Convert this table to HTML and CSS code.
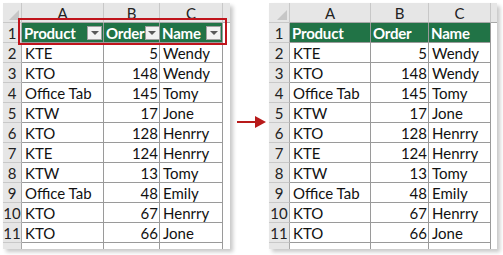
FILE: index.html
```html
<!DOCTYPE html>
<html>
<head>
<meta charset="utf-8">
<link rel="stylesheet" href="styles.css">
</head>
<body>
<div class="page">
  <div class="sheet sheet-left">
    <div class="corner"><svg width="12" height="12" viewBox="0 0 12 12"><polygon points="11,1 11,11 1,11" fill="#c6c6c6"/></svg></div>
    <div class="colhdr">A</div><div class="colhdr">B</div><div class="colhdr">C</div><div class="colhdr extra"></div>

    <div class="rowhdr">1</div>
    <div class="cell head"><span>Product</span><span class="dd"></span></div>
    <div class="cell head"><span>Order</span><span class="dd"></span></div>
    <div class="cell head"><span>Name</span><span class="dd"></span></div>
    <div class="cell tail"></div>

    <div class="rowhdr">2</div><div class="cell">KTE</div><div class="cell num">5</div><div class="cell">Wendy</div><div class="cell tail"></div>
    <div class="rowhdr">3</div><div class="cell">KTO</div><div class="cell num">148</div><div class="cell">Wendy</div><div class="cell tail"></div>
    <div class="rowhdr">4</div><div class="cell">Office Tab</div><div class="cell num">145</div><div class="cell">Tomy</div><div class="cell tail"></div>
    <div class="rowhdr">5</div><div class="cell">KTW</div><div class="cell num">17</div><div class="cell">Jone</div><div class="cell tail"></div>
    <div class="rowhdr">6</div><div class="cell">KTO</div><div class="cell num">128</div><div class="cell">Henrry</div><div class="cell tail"></div>
    <div class="rowhdr">7</div><div class="cell">KTE</div><div class="cell num">124</div><div class="cell">Henrry</div><div class="cell tail"></div>
    <div class="rowhdr">8</div><div class="cell">KTW</div><div class="cell num">13</div><div class="cell">Tomy</div><div class="cell tail"></div>
    <div class="rowhdr">9</div><div class="cell">Office Tab</div><div class="cell num">48</div><div class="cell">Emily</div><div class="cell tail"></div>
    <div class="rowhdr">10</div><div class="cell">KTO</div><div class="cell num">67</div><div class="cell">Henrry</div><div class="cell tail"></div>
    <div class="rowhdr">11</div><div class="cell">KTO</div><div class="cell num">66</div><div class="cell">Jone</div><div class="cell tail"></div>
    <div class="rowhdr part"></div><div class="cell part"></div><div class="cell part"></div><div class="cell part"></div><div class="cell tail part"></div>

    <div class="highlight"></div>
  </div>

  <div class="arrow">
    <svg width="30" height="12" viewBox="0 0 30 12"><rect x="0" y="5" width="19" height="2" fill="#b81a1a"/><polygon points="18,0 29,6 18,12" fill="#b81a1a"/></svg>
  </div>

  <div class="sheet sheet-right">
    <div class="corner"><svg width="12" height="12" viewBox="0 0 12 12"><polygon points="11,1 11,11 1,11" fill="#c6c6c6"/></svg></div>
    <div class="colhdr">A</div><div class="colhdr">B</div><div class="colhdr">C</div><div class="colhdr extra"></div>

    <div class="rowhdr">1</div>
    <div class="cell head">Product</div>
    <div class="cell head">Order</div>
    <div class="cell head">Name</div>
    <div class="cell tail"></div>

    <div class="rowhdr">2</div><div class="cell">KTE</div><div class="cell num">5</div><div class="cell">Wendy</div><div class="cell tail"></div>
    <div class="rowhdr">3</div><div class="cell">KTO</div><div class="cell num">148</div><div class="cell">Wendy</div><div class="cell tail"></div>
    <div class="rowhdr">4</div><div class="cell">Office Tab</div><div class="cell num">145</div><div class="cell">Tomy</div><div class="cell tail"></div>
    <div class="rowhdr">5</div><div class="cell">KTW</div><div class="cell num">17</div><div class="cell">Jone</div><div class="cell tail"></div>
    <div class="rowhdr">6</div><div class="cell">KTO</div><div class="cell num">128</div><div class="cell">Henrry</div><div class="cell tail"></div>
    <div class="rowhdr">7</div><div class="cell">KTE</div><div class="cell num">124</div><div class="cell">Henrry</div><div class="cell tail"></div>
    <div class="rowhdr">8</div><div class="cell">KTW</div><div class="cell num">13</div><div class="cell">Tomy</div><div class="cell tail"></div>
    <div class="rowhdr">9</div><div class="cell">Office Tab</div><div class="cell num">48</div><div class="cell">Emily</div><div class="cell tail"></div>
    <div class="rowhdr">10</div><div class="cell">KTO</div><div class="cell num">67</div><div class="cell">Henrry</div><div class="cell tail"></div>
    <div class="rowhdr">11</div><div class="cell">KTO</div><div class="cell num">66</div><div class="cell">Jone</div><div class="cell tail"></div>
    <div class="rowhdr part"></div><div class="cell part"></div><div class="cell part"></div><div class="cell part"></div><div class="cell tail part"></div>
  </div>
</div>
</body>
</html>
```

FILE: styles.css
```css
* { box-sizing: border-box; }
html, body { margin: 0; padding: 0; background: #ffffff; }
body { width: 503px; height: 255px; overflow: hidden; font-family: Lato, "Open Sans", sans-serif; }

.page {
  display: flex;
  align-items: flex-start;
  padding: 3px 0 0 3px;
}

.sheet {
  position: relative;
  display: grid;
  grid-template-rows: 20px repeat(11, 20px) 6px;
  background: #ffffff;
  box-shadow: 3px 3px 4px rgba(0, 0, 0, 0.22);
  font-size: 15px;
  color: #111;
}
.sheet-left { grid-template-columns: 19px 82px 56px 63px 7px; }
.sheet-right { grid-template-columns: 21px 81px 58px 62px 6px; margin-left: 39px; }

.corner {
  background: #e6e6e6;
  border-right: 1px solid #c8c8c8;
  border-bottom: 1px solid #c8c8c8;
  display: flex;
  align-items: flex-end;
  justify-content: flex-end;
  padding: 0 1px 1px 0;
}
.colhdr {
  background: #e6e6e6;
  border-right: 1px solid #c8c8c8;
  border-bottom: 1px solid #a8a8a8;
  text-align: center;
  line-height: 20px;
  color: #222;
}
.colhdr.extra { border-right: none; }

.rowhdr {
  background: #e6e6e6;
  border-right: 1px solid #a8a8a8;
  border-bottom: 1px solid #c8c8c8;
  text-align: center;
  line-height: 20px;
  color: #222;
}
.rowhdr.part { border-bottom: none; }

.cell {
  border-right: 1px solid #9a9a9a;
  border-bottom: 1px solid #9a9a9a;
  padding: 0 1px 0 3px;
  line-height: 20px;
  white-space: nowrap;
  overflow: hidden;
}
.cell.num { text-align: right; }
.cell.tail { border-right: none; border-bottom-color: transparent; }
.cell.part { border-bottom: none; }

.cell.head {
  background: #217346;
  color: #ffffff;
  font-weight: 700;
  letter-spacing: -0.2px;
  display: flex;
  align-items: center;
  justify-content: space-between;
  padding-left: 2px;
  padding-right: 1px;
}
.sheet-right .cell.head { display: block; }

.dd {
  width: 15px;
  height: 14px;
  background: #f2f2f2;
  border: 1px solid #a0a0a0;
  display: flex;
  align-items: center;
  justify-content: center;
  flex: none;
}
.dd::after {
  content: "";
  border-left: 4px solid transparent;
  border-right: 4px solid transparent;
  border-top: 4px solid #595959;
}

.highlight {
  position: absolute;
  left: 15px;
  top: 15px;
  width: 209px;
  height: 27px;
  border: 2px solid #c0141c;
  pointer-events: none;
}

.arrow {
  margin-top: 113px;
  margin-left: 7px;
  margin-right: -37px;
  width: 30px;
  height: 12px;
}
.arrow svg { display: block; }
```
